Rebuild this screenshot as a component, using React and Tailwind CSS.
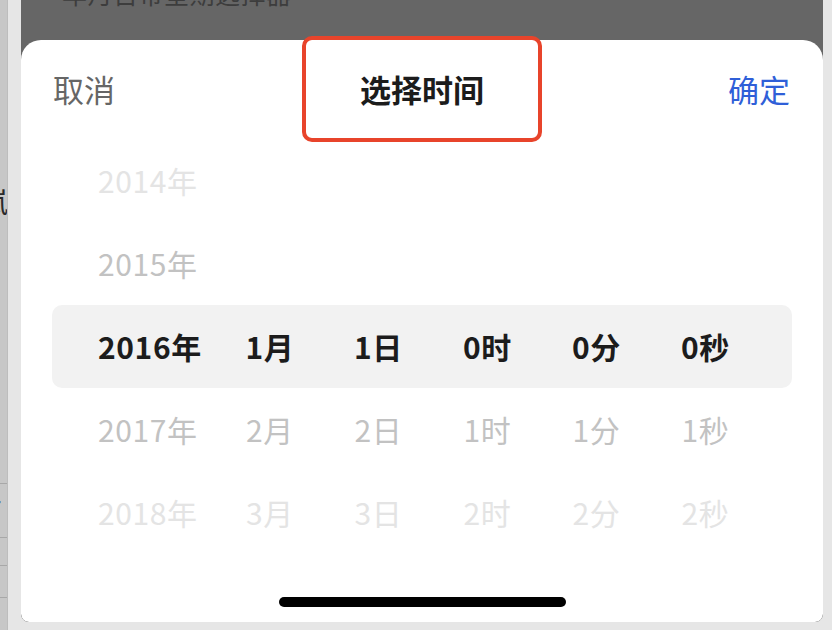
const FONT = { fontFamily: '"Noto Sans CJK SC", "Noto Sans", sans-serif' }

const COLUMNS = [
  { unit: '年', start: 2014 },
  { unit: '月', start: 2016, base: 1 },
  { unit: '日', start: 2016, base: 1 },
  { unit: '时', start: 2016, base: 0 },
  { unit: '分', start: 2016, base: 0 },
  { unit: '秒', start: 2016, base: 0 },
]

const YEARS = [2014, 2015, 2016, 2017, 2018]
const SELECTED = 2016

const ROW_TONE = {
  0: 'text-[#1c1c1c] font-bold',
  1: 'text-[#c2c2c2]',
  2: 'text-[#e4e4e4]',
}

function cellText(col, year) {
  if (col.unit === '年') return `${year}年`
  if (year < col.start) return ''
  return `${col.base + (year - col.start)}${col.unit}`
}

function PickerRow({ year }) {
  const distance = Math.abs(year - SELECTED)
  const selected = distance === 0
  return (
    <div
      className={`h-[83px] mx-[31px] rounded-[10px] grid grid-cols-[120px_108px_109px_109px_109px_109px] items-center pl-[44px] text-[30px] tracking-[0.6px] ${ROW_TONE[distance]} ${selected ? 'bg-[#f2f2f2]' : ''}`}
    >
      {COLUMNS.map((col, i) => (
        <span key={col.unit} className={i === 0 ? 'text-left pl-[2px]' : 'text-center'}>
          {cellText(col, year)}
        </span>
      ))}
    </div>
  )
}

function BackdropStrip() {
  return (
    <div className="w-[8px] shrink-0 bg-[#c7c7c7] overflow-hidden flex flex-col border-r border-[#bdbdbd]">
      <div className="h-[184px]" />
      <span className="ml-[-20px] text-[28px] leading-[34px] text-[#2a2a2a]">岚</span>
      <div className="h-[265px]" />
      <div className="h-px bg-[#a8a8a8]" />
      <span className="ml-[-8px] text-[26px] leading-[44px] text-[#3a3a3a]" style={{ fontFamily: '"Liberation Sans", sans-serif' }}>r</span>
      <div className="h-[9px]" />
      <div className="h-px bg-[#a8a8a8]" />
      <div className="h-[27px]" />
      <div className="h-px bg-[#a8a8a8]" />
      <div className="h-[31px]" />
      <div className="h-px bg-[#a8a8a8]" />
    </div>
  )
}

export default function App() {
  return (
    <div className="w-[832px] h-[630px] flex bg-[#e6e6e6] overflow-hidden relative" style={FONT}>
      <BackdropStrip />

      <div className="flex-1 pl-[13px] pr-[9px] pb-[8px] rounded-bl-[14px]">
        <div className="h-full bg-[#666666] rounded-b-[8px] overflow-hidden flex flex-col">
          <div className="h-[40px] overflow-hidden pl-[41px]">
            <p className="mt-[-22px] text-[25px] leading-[30px] tracking-[0.5px] text-[#3d3d3d]">年月日带星期选择器</p>
          </div>

          <div className="flex-1 bg-white rounded-t-[20px] rounded-b-[8px] flex flex-col">
            <header className="h-[99px] pb-[1px] grid grid-cols-3 items-center px-[32px] text-[31px]">
              <span className="text-[#666666]">取消</span>
              <span className="text-center font-bold text-[#1c1c1c]">选择时间</span>
              <span className="text-right text-[#2f5fd8] pr-[1px]">确定</span>
            </header>

            <div className="flex flex-col">
              {YEARS.map((year) => (
                <PickerRow key={year} year={year} />
              ))}
            </div>

            <div className="mt-[43px] mx-auto w-[287px] h-[10px] rounded-full bg-black" />
          </div>
        </div>
      </div>

      {/* annotation frame drawn over the title */}
      <div className="absolute left-[302px] top-[36px] w-[240px] h-[106px] border-[4px] border-[#e8442b] rounded-[10px]" />
    </div>
  )
}
